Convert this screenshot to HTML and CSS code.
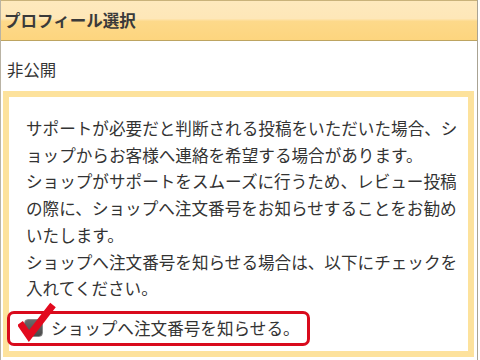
FILE: index.html
```html
<!DOCTYPE html>
<html lang="ja">
<head>
<meta charset="utf-8">
<link rel="stylesheet" href="styles.css">
</head>
<body>
<div class="page">
  <div class="header">プロフィール選択</div>
  <div class="value">非公開</div>
  <div class="notice">
    <p class="notice-text">サポートが必要だと判断される投稿をいただいた場合、ショップからお客様へ連絡を希望する場合があります。<br>ショップがサポートをスムーズに行うため、レビュー投稿の際に、ショップへ注文番号をお知らせすることをお勧めいたします。<br>ショップへ注文番号を知らせる場合は、以下にチェックを入れてください。</p>
    <label class="check-row">
      <span class="checkbox">
        <svg class="checkmark" width="40" height="42" viewBox="0 0 40 42"><path d="M2 21 L11 34 L35 3" fill="none" stroke="#e20a1e" stroke-width="7" stroke-linejoin="miter" stroke-linecap="butt"/></svg>
      </span>
      <span class="check-label">ショップへ注文番号を知らせる。</span>
    </label>
  </div>
</div>
</body>
</html>
```
FILE: styles.css
```css
* { box-sizing: border-box; }
html, body { margin: 0; padding: 0; background: #fff; }
body {
  font-family: "Noto Sans CJK JP", "Noto Sans", sans-serif;
  color: #333;
  width: 480px;
  height: 360px;
  overflow: hidden;
}
.page {
  width: 478px;
  height: 360px;
  border-left: 1px solid #b9b3a4;
  border-right: 1px solid #a9a393;
}
.header {
  height: 41px;
  border-top: 1px solid #c9b27a;
  border-bottom: 1px solid #bda461;
  background: linear-gradient(#fee9bd 0%, #fee7b8 45%, #fdd98a 52%, #fdd57e 100%);
  padding-left: 3px;
  font-size: 16.5px;
  font-weight: 600;
  line-height: 38px;
  color: #3a3a3a;
}
.value {
  padding: 16px 0 0 6px;
  font-size: 16.4px;
  line-height: 24px;
  color: #333;
}
.notice {
  margin: 10px 0 0 2px;
  width: 471px;
  border: 6px solid #fde29c;
  padding: 18px 7px 5px 0;
}
.notice-text {
  margin: 0 0 0 17px;
  font-size: 16.6px;
  line-height: 26.7px;
  line-break: loose;
  color: #333;
}
.check-row {
  margin: 9px 0 0 -2px;
  width: 303px;
  height: 35px;
  border: 3px solid #d90a1c;
  border-radius: 7px;
  display: flex;
  align-items: center;
  padding-left: 14px;
}
.checkbox {
  position: relative;
  width: 19px;
  height: 18px;
  border-radius: 4px;
  background: linear-gradient(#6a6a6a, #4a4a4a);
  border: 1px solid #8a8a8a;
  flex: none;
}
.checkmark {
  position: absolute;
  left: -7px;
  top: -18px;
}
.check-label {
  margin-left: 8px;
  font-size: 16.6px;
  line-height: 24px;
  color: #333;
}
```
